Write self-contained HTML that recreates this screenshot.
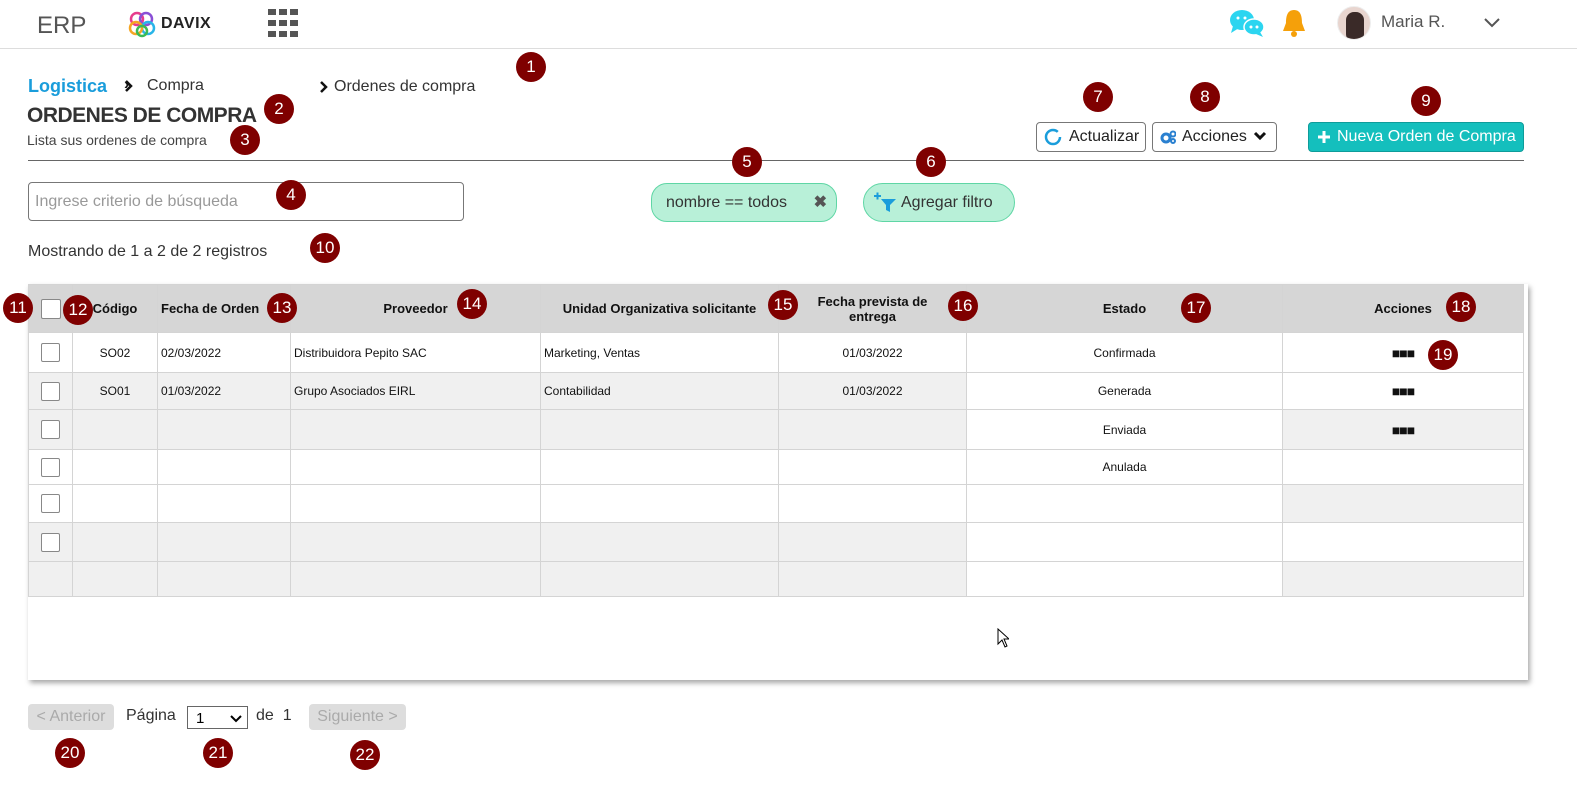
<!DOCTYPE html>
<html><head><meta charset="utf-8"><style>
*{box-sizing:border-box;margin:0;padding:0}
body{width:1577px;height:789px;background:#fff;font-family:"Liberation Sans",Arial,sans-serif;position:relative;overflow:hidden;color:#222}
.a{position:absolute}
.b{position:absolute;width:30px;height:30px;border-radius:50%;background:#7f0000;color:#fff;font-size:17px;line-height:30px;text-align:center;transform:translate(-50%,-50%);z-index:5}
table{position:absolute;left:28px;top:284px;border-collapse:collapse;table-layout:fixed;font-size:12px;color:#111}
td,th{border:1px solid #d4d4d4;overflow:hidden;white-space:nowrap}
th{background:#d6d6d6;font-weight:bold;font-size:13px;height:48px}
td{padding:0 3px}
.g{background:#f0f0f0}
.c{text-align:center}
.cb{display:inline-block;width:19px;height:19px;border:1px solid #888;border-radius:2px;background:#fff;vertical-align:middle}
.dots{font-weight:bold;letter-spacing:-1px;font-size:14px}
.btn{position:absolute;border:1px solid #777;border-radius:4px;height:30px;font-size:16px;line-height:28px;background:#fff}
</style></head><body>
<!-- header -->
<div class="a" style="left:37px;top:12px;font-size:24px;color:#555">ERP</div>
<svg class="a" style="left:127px;top:10px" width="30" height="28" viewBox="0 0 30 28"><circle cx="10" cy="9" r="6" fill="none" stroke="#e63c8c" stroke-width="2.5"/><circle cx="19" cy="9" r="6" fill="none" stroke="#8a4fd6" stroke-width="2.5"/><circle cx="21" cy="18" r="6" fill="none" stroke="#28b5e8" stroke-width="2.5"/><circle cx="9" cy="18" r="6" fill="none" stroke="#f5a623" stroke-width="2.5"/><circle cx="15" cy="21" r="5" fill="none" stroke="#3cba54" stroke-width="2.5"/></svg>
<div class="a" style="left:161px;top:15px;font-size:16px;font-weight:bold;color:#222;letter-spacing:.5px">DAVIX</div>
<svg class="a" style="left:268px;top:9px" width="30" height="29"><g fill="#555"><rect x="0" y="0" width="8" height="6"/><rect x="11" y="0" width="8" height="6"/><rect x="22" y="0" width="8" height="6"/><rect x="0" y="11" width="8" height="6"/><rect x="11" y="11" width="8" height="6"/><rect x="22" y="11" width="8" height="6"/><rect x="0" y="22" width="8" height="6"/><rect x="11" y="22" width="8" height="6"/><rect x="22" y="22" width="8" height="6"/></g></svg>
<svg class="a" style="left:1229px;top:8px" width="37" height="30"><ellipse cx="13" cy="12" rx="12" ry="10" fill="#2cd5f0"/><path d="M4 18 L2 25 L10 20Z" fill="#2cd5f0"/><ellipse cx="25" cy="19" rx="10" ry="8" fill="#2cd5f0" stroke="#fff" stroke-width="1.5"/><path d="M31 24 L34 29 L27 26Z" fill="#2cd5f0"/><circle cx="9" cy="10" r="1.5" fill="#fff"/><circle cx="16" cy="10" r="1.5" fill="#fff"/><circle cx="22" cy="19" r="1.5" fill="#fff"/><circle cx="28" cy="19" r="1.5" fill="#fff"/></svg>
<svg class="a" style="left:1281px;top:8px" width="26" height="30"><path d="M13 2 C6 2 5 9 5 15 L2 23 L24 23 L21 15 C21 9 20 2 13 2Z" fill="#f5a00a"/><circle cx="13" cy="26" r="3" fill="#f5a00a"/></svg>
<div class="a" style="left:1337px;top:6px;width:34px;height:34px;border-radius:50%;background:#e8d5cf;border:1px solid #eee;overflow:hidden"><div style="margin:5px 0 0 8px;width:18px;height:30px;border-radius:8px;background:#3a2a28"></div></div>
<div class="a" style="left:1381px;top:12px;font-size:17px;color:#555">Maria R.</div>
<svg class="a" style="left:1483px;top:17px" width="18" height="12"><path d="M2 2 L9 9 L16 2" fill="none" stroke="#555" stroke-width="2"/></svg>
<div class="a" style="left:0;top:48px;width:1577px;height:1px;background:#ddd"></div>

<div class="a" style="left:28px;top:76px;font-size:18px;font-weight:bold;color:#1a9ddb">Logistica</div>
<div class="a" style="left:124px;top:76px;font-size:16px;font-weight:bold;color:#111">›</div>
<svg class="a" style="left:124px;top:80px" width="10" height="12"><path d="M2 1 L7 6 L2 11" fill="none" stroke="#111" stroke-width="2.5"/></svg>
<div class="a" style="left:147px;top:77px;font-size:16px;color:#333">Compra</div>
<svg class="a" style="left:319px;top:81px" width="10" height="12"><path d="M2 1 L7 6 L2 11" fill="none" stroke="#111" stroke-width="2.5"/></svg>
<div class="a" style="left:334px;top:78px;font-size:16px;color:#333">Ordenes de compra</div>
<div class="a" style="left:27px;top:104px;font-size:21px;font-weight:bold;color:#333;letter-spacing:-.5px">ORDENES DE COMPRA</div>
<div class="a" style="left:27px;top:132px;font-size:14px;color:#444">Lista sus ordenes de compra</div>

<div class="btn" style="left:1036px;top:122px;width:110px;padding-left:32px">Actualizar</div>
<svg class="a" style="left:1044px;top:128px" width="18" height="18"><circle cx="9" cy="9" r="7" fill="none" stroke="#1a9ddb" stroke-width="2.5" stroke-dasharray="38 6"/></svg>
<div class="btn" style="left:1152px;top:122px;width:125px;padding-left:29px">Acciones</div>
<svg class="a" style="left:1160px;top:130px" width="16" height="14"><circle cx="6" cy="8" r="4" fill="none" stroke="#2a80d0" stroke-width="3"/><circle cx="13" cy="4" r="2.5" fill="none" stroke="#2a80d0" stroke-width="2"/><circle cx="13" cy="11" r="2" fill="none" stroke="#2a80d0" stroke-width="2"/></svg>
<svg class="a" style="left:1253px;top:131px" width="14" height="10"><path d="M2 2 L7 7 L12 2" fill="none" stroke="#111" stroke-width="3"/></svg>
<div class="a" style="left:1308px;top:122px;width:216px;height:30px;border-radius:4px;background:#14bfbd;border:1px solid #0e9c9a;color:#fff;font-size:16px;line-height:28px;padding-left:28px">Nueva Orden de Compra</div>
<svg class="a" style="left:1317px;top:130px" width="14" height="14"><path d="M7 1V13M1 7H13" stroke="#fff" stroke-width="3"/></svg>

<div class="a" style="left:28px;top:160px;width:1496px;height:1px;background:#666"></div>

<div class="a" style="left:28px;top:182px;width:436px;height:39px;border:1px solid #777;border-radius:4px;font-size:16px;color:#999;line-height:37px;padding-left:6px">Ingrese criterio de búsqueda</div>
<div class="a" style="left:651px;top:183px;width:186px;height:39px;border:1px solid #5fd6a5;border-radius:16px;background:#b8f0d8;font-size:16px;line-height:37px;padding-left:14px;color:#333">nombre == todos<span style="position:absolute;right:9px;color:#555;font-weight:bold">✖</span></div>
<div class="a" style="left:863px;top:183px;width:152px;height:39px;border:1px solid #5fd6a5;border-radius:20px;background:#b8f0d8;font-size:16px;line-height:37px;padding-left:37px;color:#333">Agregar filtro</div>
<svg class="a" style="left:873px;top:191px" width="24" height="22"><path d="M1 5H8M4.5 1.5V8.5" stroke="#1a9ddb" stroke-width="2"/><path d="M8 8H23L17 14V21L13 19V14Z" fill="#1a9ddb"/></svg>

<div class="a" style="left:28px;top:243px;font-size:16px;color:#333">Mostrando de 1 a 2 de 2 registros</div>

<div class="a" style="left:28px;top:284px;width:1500px;height:396px;background:#fff;box-shadow:2px 3px 5px rgba(0,0,0,.35)"></div>
<table>
<colgroup><col style="width:44px"><col style="width:85px"><col style="width:133px"><col style="width:250px"><col style="width:238px"><col style="width:188px"><col style="width:316px"><col style="width:241px"></colgroup>
<tr><th><span class="cb" style="width:20px;height:20px"></span></th><th>Código</th><th style="text-align:left;padding-left:3px">Fecha de Orden</th><th>Proveedor</th><th>Unidad Organizativa solicitante</th><th style="white-space:normal;line-height:15px">Fecha prevista de<br>entrega</th><th>Estado</th><th>Acciones</th></tr>
<tr style="height:40px"><td class="c"><span class="cb"></span></td><td class="c">SO02</td><td>02/03/2022</td><td>Distribuidora Pepito SAC</td><td>Marketing, Ventas</td><td class="c">01/03/2022</td><td class="c">Confirmada</td><td class="c"><span class="dots">■■■</span></td></tr>
<tr style="height:37px" class="g"><td class="c"><span class="cb"></span></td><td class="c">SO01</td><td>01/03/2022</td><td>Grupo Asociados EIRL</td><td>Contabilidad</td><td class="c">01/03/2022</td><td class="c" style="background:#fff">Generada</td><td class="c" style="background:#fff"><span class="dots">■■■</span></td></tr>
<tr style="height:40px" class="g"><td class="c"><span class="cb"></span></td><td></td><td></td><td></td><td></td><td></td><td class="c" style="background:#fff">Enviada</td><td class="c"><span class="dots">■■■</span></td></tr>
<tr style="height:35px"><td class="c"><span class="cb"></span></td><td></td><td></td><td></td><td></td><td></td><td class="c">Anulada</td><td></td></tr>
<tr style="height:38px"><td class="c"><span class="cb"></span></td><td></td><td></td><td></td><td></td><td></td><td></td><td class="g"></td></tr>
<tr style="height:39px" class="g"><td class="c"><span class="cb"></span></td><td></td><td></td><td></td><td></td><td></td><td style="background:#fff"></td><td style="background:#fff"></td></tr>
<tr style="height:35px" class="g"><td></td><td></td><td></td><td></td><td></td><td></td><td style="background:#fff"></td><td></td></tr>
</table>
<svg class="a" style="left:997px;top:628px" width="12" height="20"><path d="M1 1V16L5 12L8 19L10 18L7 11H12Z" fill="#fff" stroke="#000" stroke-width="1"/></svg>

<div class="a" style="left:28px;top:704px;width:86px;height:26px;background:#ddd;border-radius:4px;color:#aaa;font-size:16px;line-height:26px;text-align:center">&lt; Anterior</div>
<div class="a" style="left:126px;top:707px;font-size:16px;color:#333">Página</div>
<div class="a" style="left:187px;top:706px;width:61px;height:23px;border:1px solid #666;font-size:15px;line-height:24px;padding-left:8px;color:#000">1<svg style="position:absolute;right:5px;top:8px" width="12" height="8"><path d="M1 1L6 6L11 1" fill="none" stroke="#000" stroke-width="2"/></svg></div>
<div class="a" style="left:256px;top:707px;font-size:16px;color:#333">de&nbsp; 1</div>
<div class="a" style="left:309px;top:704px;width:97px;height:26px;background:#ddd;border-radius:4px;color:#aaa;font-size:16px;line-height:26px;text-align:center">Siguiente &gt;</div>

<div class="b" style="left:531px;top:67px">1</div>
<div class="b" style="left:279px;top:109px">2</div>
<div class="b" style="left:245px;top:140px">3</div>
<div class="b" style="left:291px;top:195px">4</div>
<div class="b" style="left:747px;top:162px">5</div>
<div class="b" style="left:931px;top:162px">6</div>
<div class="b" style="left:1098px;top:97px">7</div>
<div class="b" style="left:1205px;top:97px">8</div>
<div class="b" style="left:1426px;top:101px">9</div>
<div class="b" style="left:325px;top:248px">10</div>
<div class="b" style="left:18px;top:308px">11</div>
<div class="b" style="left:78px;top:310px">12</div>
<div class="b" style="left:282px;top:308px">13</div>
<div class="b" style="left:472px;top:304px">14</div>
<div class="b" style="left:783px;top:305px">15</div>
<div class="b" style="left:963px;top:306px">16</div>
<div class="b" style="left:1196px;top:308px">17</div>
<div class="b" style="left:1461px;top:307px">18</div>
<div class="b" style="left:1443px;top:355px">19</div>
<div class="b" style="left:70px;top:753px">20</div>
<div class="b" style="left:218px;top:753px">21</div>
<div class="b" style="left:365px;top:755px">22</div>
</body></html>
